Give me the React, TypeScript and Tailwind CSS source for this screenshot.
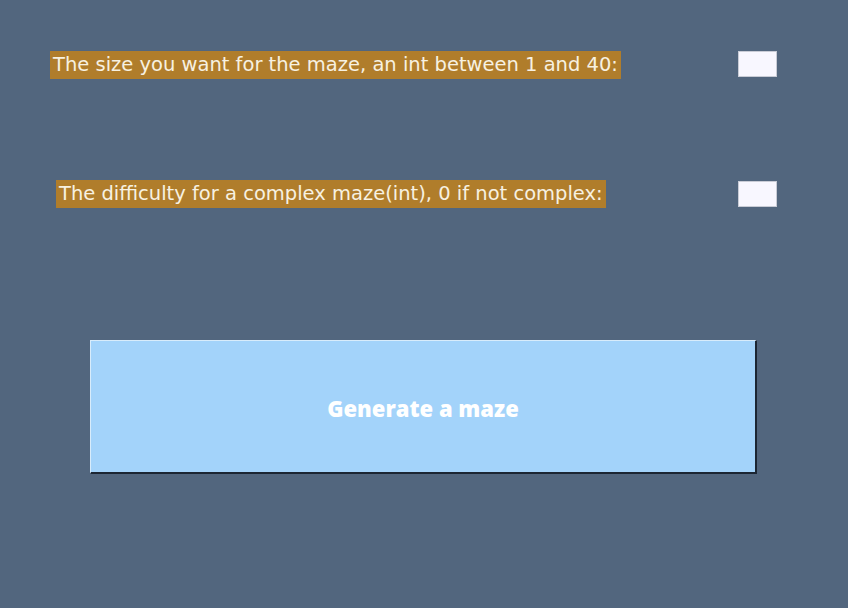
export default function App() {
  return (
    <div className="min-h-[608px] w-full bg-[#52667e] flex flex-col">
      {/* size row */}
      <div className="flex items-start pt-[51px] pl-[50px] pr-[71px]">
        <span className="bg-[#b07d2b] text-[#f7f1e1] h-[28px] px-[3px] leading-[28px] text-[19.5px] font-[family-name:DejaVu_Sans,Verdana,sans-serif] whitespace-nowrap">
          The size you want for the maze, an int between 1 and 40:
        </span>
        <input className="ml-auto w-[39px] h-[26px] bg-[#f8f7ff] border border-[#c9ccd6] outline-none" />
      </div>

      {/* difficulty row */}
      <div className="flex items-start pt-[101px] pl-[56px] pr-[71px]">
        <span className="bg-[#b07d2b] text-[#f7f1e1] h-[28px] px-[3px] leading-[28px] text-[19.5px] font-[family-name:DejaVu_Sans,Verdana,sans-serif] whitespace-nowrap">
          The difficulty for a complex maze(int), 0 if not complex:
        </span>
        <input className="ml-auto mt-px w-[39px] h-[26px] bg-[#f8f7ff] border border-[#c9ccd6] outline-none" />
      </div>

      {/* generate button */}
      <div className="pt-[132px] pl-[90px]">
        <button className="w-[667px] h-[134px] bg-[#a3d3fa] text-white font-extrabold text-[22px] pt-[3px] font-[family-name:Open_Sans,sans-serif] border-t border-l border-t-[#d8ecfb] border-l-[#d8ecfb] border-r-2 border-b-2 border-r-[#1c2633] border-b-[#1c2633]">
          Generate a maze
        </button>
      </div>
    </div>
  );
}
